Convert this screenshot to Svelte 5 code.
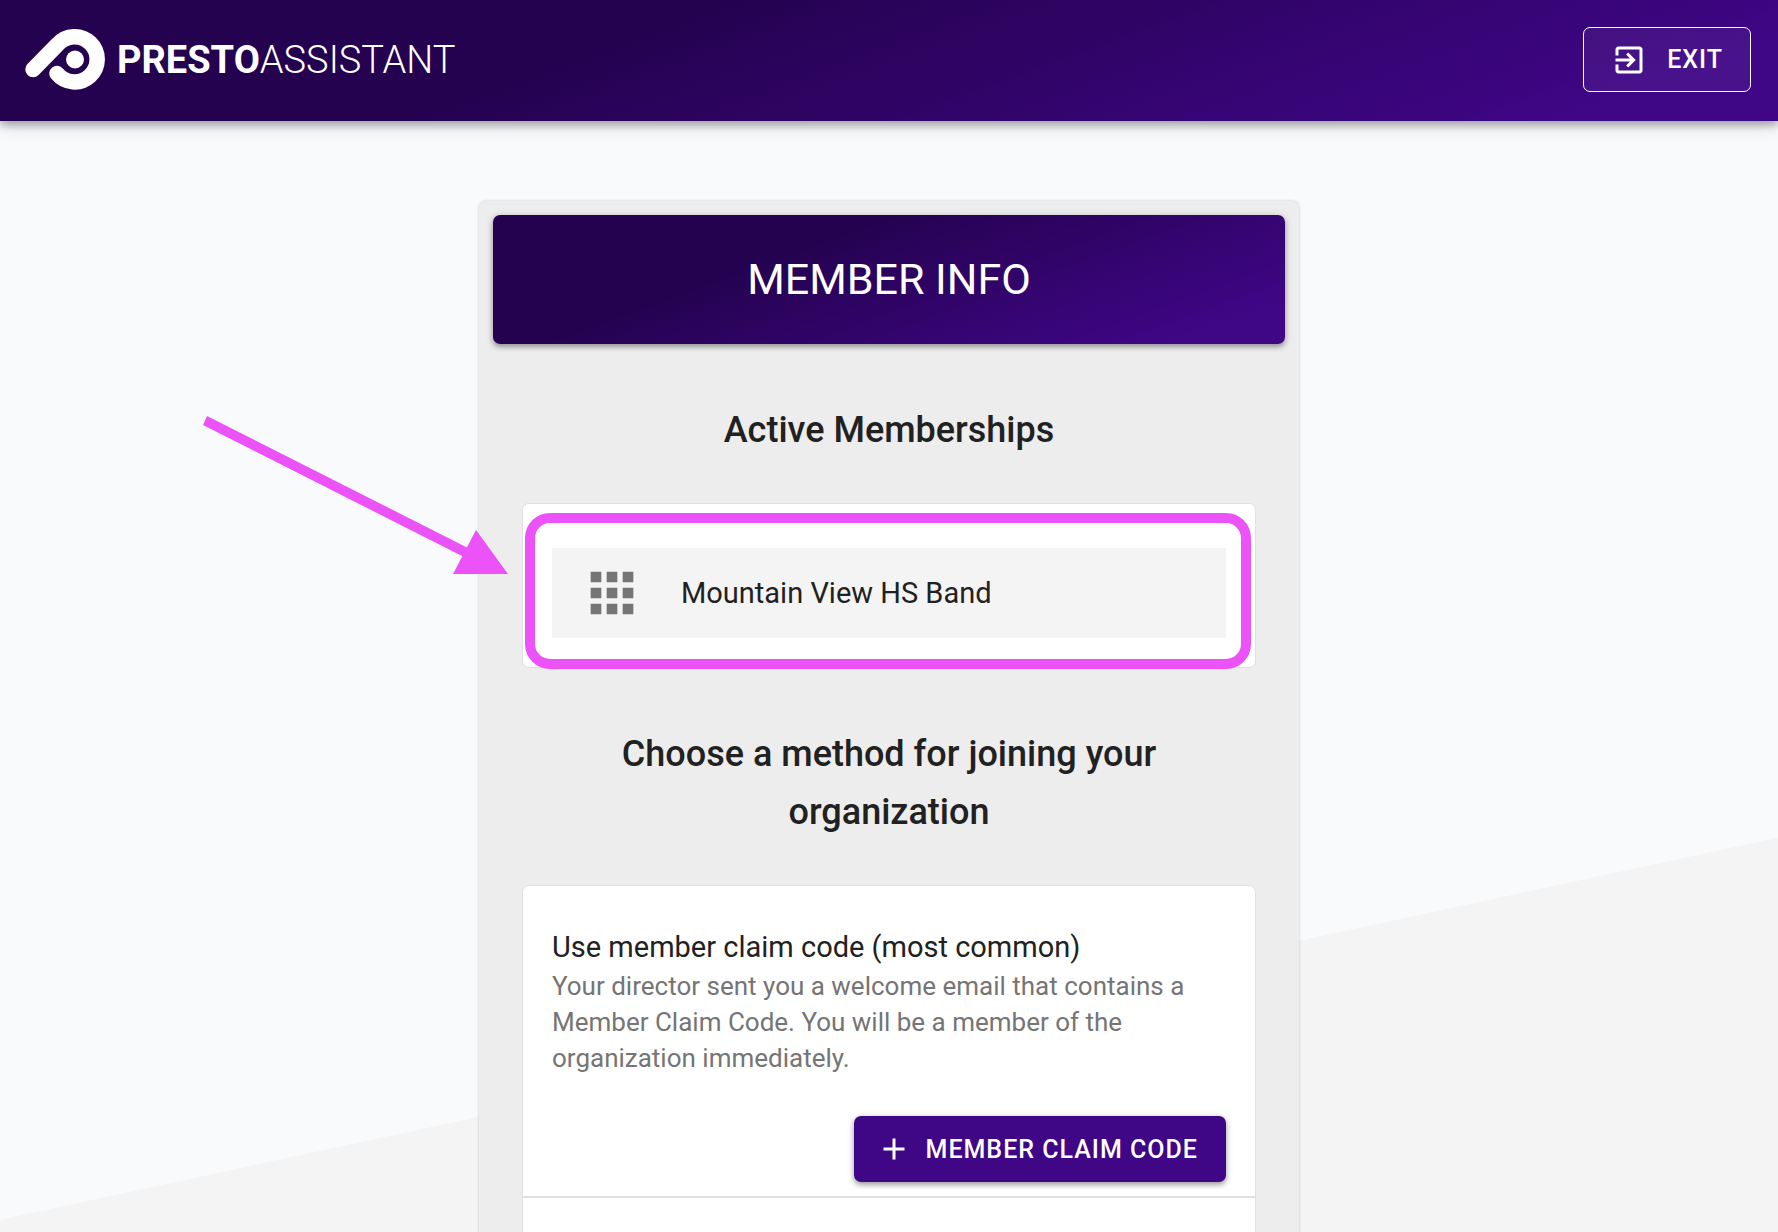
<script>
    const memberships = [{ id: 1, name: "Mountain View HS Band" }];

    const joinMethods = [
        {
            title: "Use member claim code (most common)",
            text: "Your director sent you a welcome email that contains a Member Claim Code. You will be a member of the organization immediately.",
            action: "Member Claim Code",
        },
    ];
</script>

<div class="page">
    <header class="app-bar">
        <a class="brand" href="/" aria-label="Presto Assistant">
            <svg class="brand-mark" viewBox="25 28 82 63" fill="none">
                <path
                    d="M33 69.500 L57.500 44.500 A22.600 22.600 0 1 1 57 73.500"
                    stroke="#fff"
                    stroke-width="15.500"
                    stroke-linecap="round"
                    stroke-linejoin="round"
                />
                <circle cx="75" cy="59.500" r="9" fill="#fff" />
            </svg>
            <span class="brand-text"><b>PRESTO</b>ASSISTANT</span>
        </a>

        <button class="exit-button" type="button">
            <svg class="icon" viewBox="0 0 24 24" fill="currentColor">
                <path
                    d="M10.09 15.59 11.5 17l5-5-5-5-1.41 1.41L12.67 11H3v2h9.67l-2.58 2.59zM19 3H5c-1.11 0-2 .9-2 2v4h2V5h14v14H5v-4H3v4c0 1.1.89 2 2 2h14c1.1 0 2-.9 2-2V5c0-1.1-.9-2-2-2z"
                />
            </svg>
            Exit
        </button>
    </header>

    <main class="card">
        <h1 class="banner">MEMBER INFO</h1>

        <div class="content">
            <h2>Active Memberships</h2>

            <section class="panel memberships">
                {#each memberships as membership (membership.id)}
                    <button class="membership" type="button">
                        <svg class="apps" viewBox="0 0 24 24" fill="currentColor">
                            <path
                                d="M4 8h4V4H4v4zm6 12h4v-4h-4v4zm-6 0h4v-4H4v4zm0-6h4v-4H4v4zm6 0h4v-4h-4v4zm6-10v4h4V4h-4zm-6 4h4V4h-4v4zm6 6h4v-4h-4v4zm0 6h4v-4h-4v4z"
                            />
                        </svg>
                        {membership.name}
                    </button>
                {/each}

                <!-- Callout over the membership list -->
                <div class="highlight"></div>
                <svg class="arrow" viewBox="0 0 306 158" fill="#eb52f7">
                    <path d="M4 0 L265 132 L261 141 L0 9 Z" />
                    <path d="M273 114 L305 158 L250 158 Z" />
                </svg>
            </section>

            <h2>Choose a method for joining your organization</h2>

            <section class="panel">
                {#each joinMethods as method}
                    <article class="method">
                        <h3>{method.title}</h3>
                        <p>{method.text}</p>
                        <button class="claim-button" type="button">
                            <svg class="icon" viewBox="0 0 24 24" fill="currentColor">
                                <path d="M19 13h-6v6h-2v-6H5v-2h6V5h2v6h6v2z" />
                            </svg>
                            {method.action}
                        </button>
                    </article>
                {/each}
            </section>
        </div>
    </main>
</div>

<style>
    :global(body) {
        margin: 0;
        background: #f9fafc;
    }

    .page {
        --brand-dark: #24024f;
        --brand: #3f0686;
        --callout: #eb52f7;
        position: relative;
        display: flex;
        flex-direction: column;
        height: 100vh;
        overflow: hidden;
        font-family: Roboto, "Liberation Sans", sans-serif;
        color: #212121;
    }

    /* Slanted lower part of the backdrop */
    .page::before {
        content: "";
        position: absolute;
        inset: 0;
        z-index: -1;
        background: #f4f4f4;
        clip-path: polygon(0 99%, 100% 68%, 100% 100%, 0 100%);
    }

    button {
        font: inherit;
        border: 0;
        cursor: pointer;
    }

    .icon {
        width: 36px;
        height: 36px;
    }

    /* App bar */
    .app-bar {
        display: flex;
        flex-shrink: 0;
        justify-content: space-between;
        align-items: center;
        box-sizing: border-box;
        height: 121px;
        padding: 0 27px 2px 25px;
        background: linear-gradient(160deg, var(--brand-dark) 33%, var(--brand) 90%);
        box-shadow:
            0 4px 8px rgba(0, 0, 0, 0.2),
            0 6px 18px rgba(0, 0, 0, 0.12),
            0 2px 10px rgba(0, 0, 0, 0.14);
    }

    .brand {
        display: flex;
        align-items: center;
        gap: 10px;
        color: #fff;
        text-decoration: none;
    }

    .brand-mark {
        width: 82px;
        height: 63px;
    }

    .brand-text {
        font-size: 38px;
        line-height: 40px;
        font-weight: 300;
    }

    .brand-text b {
        font-weight: 700;
    }

    .exit-button {
        display: flex;
        align-items: center;
        gap: 20px;
        height: 65px;
        padding: 0 27px;
        border: 1px solid #fff;
        border-radius: 7px;
        background: rgba(255, 255, 255, 0.05);
        color: #fff;
        font-size: 25px;
        font-weight: 500;
        letter-spacing: 1px;
        text-transform: uppercase;
    }

    /* Card */
    .card {
        flex-shrink: 0;
        box-sizing: border-box;
        width: 100%;
        max-width: 820px;
        margin: 80px auto 0;
        padding: 14px;
        border-radius: 7px;
        background: #ededed;
        box-shadow: 0 0 3px rgba(0, 0, 0, 0.2);
    }

    .banner {
        margin: 0;
        padding: 36px 24px;
        border-radius: 7px;
        background: linear-gradient(160deg, var(--brand-dark) 33%, var(--brand) 90%);
        box-shadow:
            0 3px 5px rgba(0, 0, 0, 0.3),
            0 1px 8px rgba(0, 0, 0, 0.14);
        color: #fff;
        font-size: 43px;
        line-height: 57px;
        font-weight: 400;
        text-align: center;
    }

    .content {
        padding: 0 29px;
    }

    h2 {
        margin: 0;
        padding: 57px 60px 44px;
        font-size: 36px;
        line-height: 58px;
        font-weight: 500;
        text-align: center;
    }

    .panel {
        position: relative;
        border: 1px solid #e0e0e0;
        border-radius: 7px;
        background: #fff;
    }

    .memberships {
        padding: 44px 29px 29px;
    }

    .membership {
        display: flex;
        align-items: center;
        gap: 37px;
        width: 100%;
        height: 90px;
        padding: 0 28px;
        background: #f4f4f4;
        color: inherit;
        font-size: 29px;
        text-align: left;
    }

    .apps {
        width: 64px;
        height: 64px;
        color: #757575;
    }

    .highlight {
        position: absolute;
        inset: 9px 4px -2px 2px;
        border: 10px solid var(--callout);
        border-radius: 25px;
        pointer-events: none;
    }

    .arrow {
        position: absolute;
        top: -88px;
        right: calc(100% + 14px);
        width: 306px;
        height: 158px;
        pointer-events: none;
    }

    /* Join methods */
    .method {
        display: flex;
        flex-direction: column;
        padding: 40px 29px 14px;
        border-bottom: 2px solid #e0e0e0;
    }

    .method h3 {
        margin: 0;
        font-size: 29px;
        line-height: 42px;
        font-weight: 400;
    }

    .method p {
        margin: 0;
        color: #757575;
        font-size: 26px;
        line-height: 36px;
    }

    .claim-button {
        display: flex;
        align-items: center;
        align-self: flex-end;
        gap: 14px;
        height: 66px;
        margin-top: 40px;
        padding: 0 28px 0 22px;
        border-radius: 7px;
        background: var(--brand);
        box-shadow:
            0 3px 5px rgba(0, 0, 0, 0.3),
            0 1px 8px rgba(0, 0, 0, 0.14);
        color: #fff;
        font-size: 25px;
        font-weight: 500;
        letter-spacing: 1px;
        text-transform: uppercase;
    }

    /* keeps the last panel running past the fold */
    .method:last-child {
        margin-bottom: 120px;
    }
</style>
